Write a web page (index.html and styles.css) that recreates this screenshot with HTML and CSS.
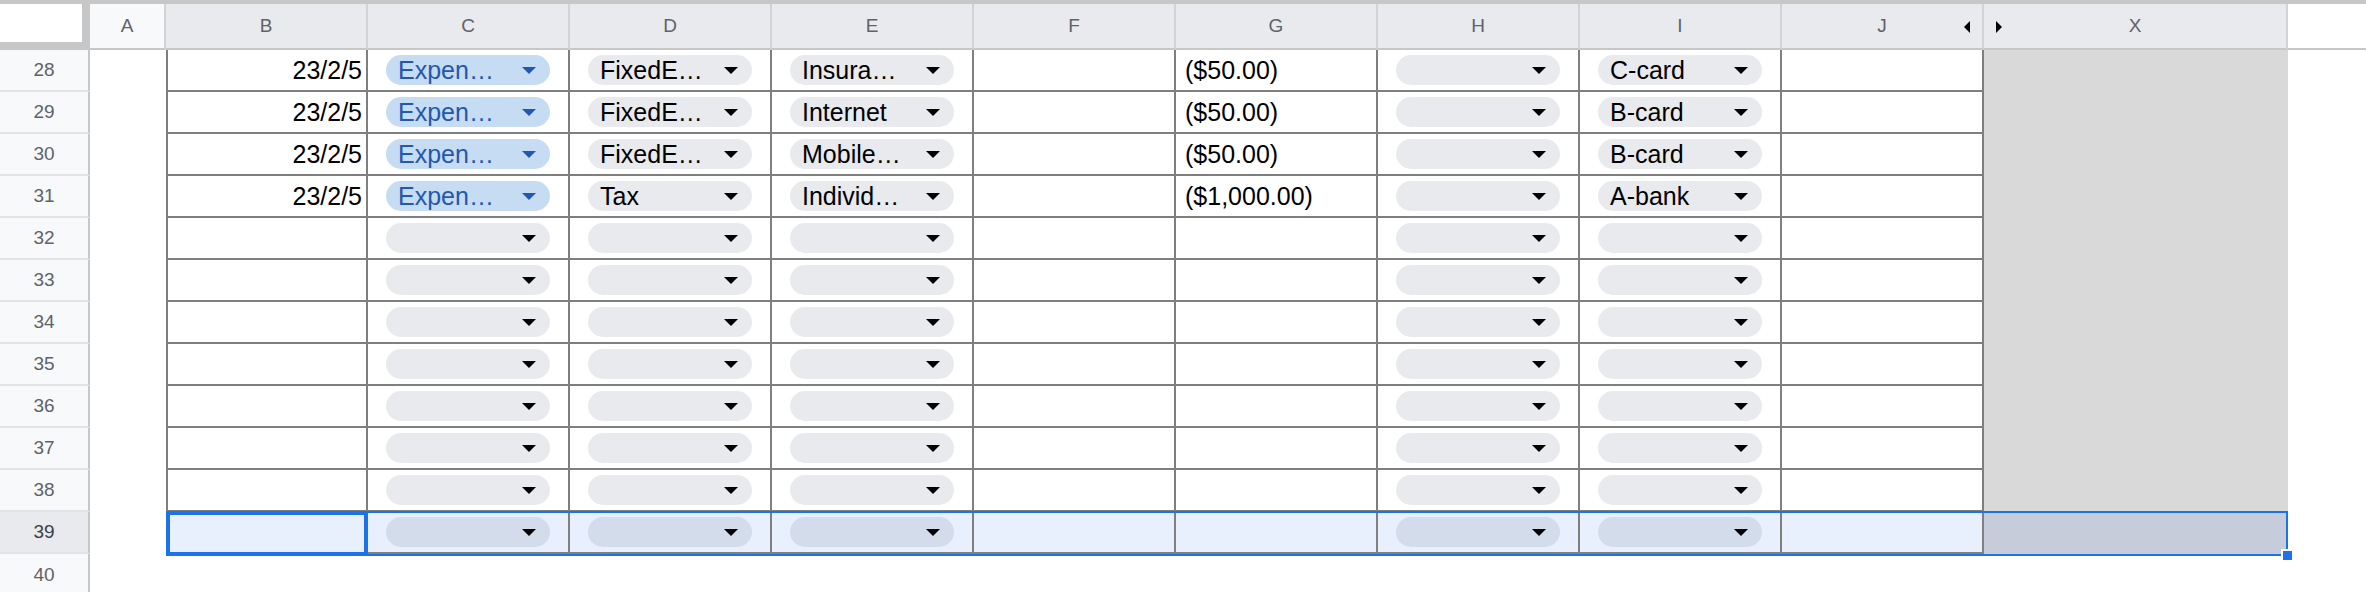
FILE: index.html
```html
<!DOCTYPE html>
<html lang="en">
<head>
    <meta charset="UTF-8">
    <title>Sheet</title>
    <link rel="stylesheet" href="styles.css">
</head>
<body>
<div class="sheet">
    <div class="topbar"></div>

    <div class="row head">
        <div class="corner"></div>
        <div class="ch">A</div>
        <div class="ch on">B</div>
        <div class="ch on">C</div>
        <div class="ch on">D</div>
        <div class="ch on">E</div>
        <div class="ch on">F</div>
        <div class="ch on">G</div>
        <div class="ch on">H</div>
        <div class="ch on">I</div>
        <div class="ch on">J<span class="hid-left"></span></div>
        <div class="ch on">X<span class="hid-right"></span></div>
        <div class="ch rest"></div>
    </div>

    <div class="row">
        <div class="rh">28</div><div class="a"></div>
        <div class="cell b num">23/2/5</div>
        <div class="cell"><span class="chip blue">Expen…<i class="caret"></i></span></div>
        <div class="cell"><span class="chip">FixedE…<i class="caret"></i></span></div>
        <div class="cell"><span class="chip">Insura…<i class="caret"></i></span></div>
        <div class="cell"></div>
        <div class="cell txt">($50.00)</div>
        <div class="cell"><span class="chip"><i class="caret"></i></span></div>
        <div class="cell"><span class="chip">C-card<i class="caret"></i></span></div>
        <div class="cell"></div>
        <div class="x"></div><div class="rest"></div>
    </div>
    <div class="row">
        <div class="rh">29</div><div class="a"></div>
        <div class="cell b num">23/2/5</div>
        <div class="cell"><span class="chip blue">Expen…<i class="caret"></i></span></div>
        <div class="cell"><span class="chip">FixedE…<i class="caret"></i></span></div>
        <div class="cell"><span class="chip">Internet<i class="caret"></i></span></div>
        <div class="cell"></div>
        <div class="cell txt">($50.00)</div>
        <div class="cell"><span class="chip"><i class="caret"></i></span></div>
        <div class="cell"><span class="chip">B-card<i class="caret"></i></span></div>
        <div class="cell"></div>
        <div class="x"></div><div class="rest"></div>
    </div>
    <div class="row">
        <div class="rh">30</div><div class="a"></div>
        <div class="cell b num">23/2/5</div>
        <div class="cell"><span class="chip blue">Expen…<i class="caret"></i></span></div>
        <div class="cell"><span class="chip">FixedE…<i class="caret"></i></span></div>
        <div class="cell"><span class="chip">Mobile…<i class="caret"></i></span></div>
        <div class="cell"></div>
        <div class="cell txt">($50.00)</div>
        <div class="cell"><span class="chip"><i class="caret"></i></span></div>
        <div class="cell"><span class="chip">B-card<i class="caret"></i></span></div>
        <div class="cell"></div>
        <div class="x"></div><div class="rest"></div>
    </div>
    <div class="row">
        <div class="rh">31</div><div class="a"></div>
        <div class="cell b num">23/2/5</div>
        <div class="cell"><span class="chip blue">Expen…<i class="caret"></i></span></div>
        <div class="cell"><span class="chip">Tax<i class="caret"></i></span></div>
        <div class="cell"><span class="chip">Individ…<i class="caret"></i></span></div>
        <div class="cell"></div>
        <div class="cell txt">($1,000.00)</div>
        <div class="cell"><span class="chip"><i class="caret"></i></span></div>
        <div class="cell"><span class="chip">A-bank<i class="caret"></i></span></div>
        <div class="cell"></div>
        <div class="x"></div><div class="rest"></div>
    </div>

    <div class="row">
        <div class="rh">32</div><div class="a"></div>
        <div class="cell b"></div>
        <div class="cell"><span class="chip"><i class="caret"></i></span></div>
        <div class="cell"><span class="chip"><i class="caret"></i></span></div>
        <div class="cell"><span class="chip"><i class="caret"></i></span></div>
        <div class="cell"></div><div class="cell"></div>
        <div class="cell"><span class="chip"><i class="caret"></i></span></div>
        <div class="cell"><span class="chip"><i class="caret"></i></span></div>
        <div class="cell"></div>
        <div class="x"></div><div class="rest"></div>
    </div>
    <div class="row">
        <div class="rh">33</div><div class="a"></div>
        <div class="cell b"></div>
        <div class="cell"><span class="chip"><i class="caret"></i></span></div>
        <div class="cell"><span class="chip"><i class="caret"></i></span></div>
        <div class="cell"><span class="chip"><i class="caret"></i></span></div>
        <div class="cell"></div><div class="cell"></div>
        <div class="cell"><span class="chip"><i class="caret"></i></span></div>
        <div class="cell"><span class="chip"><i class="caret"></i></span></div>
        <div class="cell"></div>
        <div class="x"></div><div class="rest"></div>
    </div>
    <div class="row">
        <div class="rh">34</div><div class="a"></div>
        <div class="cell b"></div>
        <div class="cell"><span class="chip"><i class="caret"></i></span></div>
        <div class="cell"><span class="chip"><i class="caret"></i></span></div>
        <div class="cell"><span class="chip"><i class="caret"></i></span></div>
        <div class="cell"></div><div class="cell"></div>
        <div class="cell"><span class="chip"><i class="caret"></i></span></div>
        <div class="cell"><span class="chip"><i class="caret"></i></span></div>
        <div class="cell"></div>
        <div class="x"></div><div class="rest"></div>
    </div>
    <div class="row">
        <div class="rh">35</div><div class="a"></div>
        <div class="cell b"></div>
        <div class="cell"><span class="chip"><i class="caret"></i></span></div>
        <div class="cell"><span class="chip"><i class="caret"></i></span></div>
        <div class="cell"><span class="chip"><i class="caret"></i></span></div>
        <div class="cell"></div><div class="cell"></div>
        <div class="cell"><span class="chip"><i class="caret"></i></span></div>
        <div class="cell"><span class="chip"><i class="caret"></i></span></div>
        <div class="cell"></div>
        <div class="x"></div><div class="rest"></div>
    </div>
    <div class="row">
        <div class="rh">36</div><div class="a"></div>
        <div class="cell b"></div>
        <div class="cell"><span class="chip"><i class="caret"></i></span></div>
        <div class="cell"><span class="chip"><i class="caret"></i></span></div>
        <div class="cell"><span class="chip"><i class="caret"></i></span></div>
        <div class="cell"></div><div class="cell"></div>
        <div class="cell"><span class="chip"><i class="caret"></i></span></div>
        <div class="cell"><span class="chip"><i class="caret"></i></span></div>
        <div class="cell"></div>
        <div class="x"></div><div class="rest"></div>
    </div>
    <div class="row">
        <div class="rh">37</div><div class="a"></div>
        <div class="cell b"></div>
        <div class="cell"><span class="chip"><i class="caret"></i></span></div>
        <div class="cell"><span class="chip"><i class="caret"></i></span></div>
        <div class="cell"><span class="chip"><i class="caret"></i></span></div>
        <div class="cell"></div><div class="cell"></div>
        <div class="cell"><span class="chip"><i class="caret"></i></span></div>
        <div class="cell"><span class="chip"><i class="caret"></i></span></div>
        <div class="cell"></div>
        <div class="x"></div><div class="rest"></div>
    </div>
    <div class="row">
        <div class="rh">38</div><div class="a"></div>
        <div class="cell b"></div>
        <div class="cell"><span class="chip"><i class="caret"></i></span></div>
        <div class="cell"><span class="chip"><i class="caret"></i></span></div>
        <div class="cell"><span class="chip"><i class="caret"></i></span></div>
        <div class="cell"></div><div class="cell"></div>
        <div class="cell"><span class="chip"><i class="caret"></i></span></div>
        <div class="cell"><span class="chip"><i class="caret"></i></span></div>
        <div class="cell"></div>
        <div class="x"></div><div class="rest"></div>
    </div>

    <!-- selected row -->
    <div class="row selected">
        <div class="rh">39</div><div class="a"></div>
        <div class="cell b"></div>
        <div class="cell"><span class="chip"><i class="caret"></i></span></div>
        <div class="cell"><span class="chip"><i class="caret"></i></span></div>
        <div class="cell"><span class="chip"><i class="caret"></i></span></div>
        <div class="cell"></div><div class="cell"></div>
        <div class="cell"><span class="chip"><i class="caret"></i></span></div>
        <div class="cell"><span class="chip"><i class="caret"></i></span></div>
        <div class="cell"></div>
        <div class="x"></div><div class="rest"></div>
        <div class="range"><span class="handle"></span></div>
        <div class="active"></div>
    </div>

    <div class="row last">
        <div class="rh">40</div>
    </div>
</div>
</body>
</html>
```

FILE: styles.css
```css
* {
    box-sizing: border-box;
    margin: 0;
    padding: 0;
}

body {
    font-family: "Liberation Sans", Arial, sans-serif;
    background-color: #fff;
    overflow: hidden;
}

.sheet {
    width: 2366px;
}

.topbar {
    height: 4px;
    background-color: #c7c7c7;
}

.row {
    display: grid;
    grid-template-columns: 90px 76px repeat(9, 202px) 304px 1fr;
    height: 42px;
    position: relative;
}

/* header row */
.row.head {
    height: 46px;
}

.corner {
    background-color: #fff;
    border-right: 8px solid #c7c7c7;
    border-bottom: 8px solid #c7c7c7;
}

.ch {
    position: relative;
    display: flex;
    align-items: center;
    justify-content: center;
    background-color: #f8f9fa;
    color: #5f6368;
    font-size: 19px;
    border-right: 2px solid #d2d3d5;
    border-bottom: 2px solid #c7c7c7;
}

.ch.on {
    background-color: #e8eaed;
}

.ch.rest {
    border-right: none;
}

.hid-left, .hid-right {
    position: absolute;
    top: 17px;
    width: 0;
    height: 0;
    border-top: 6px solid transparent;
    border-bottom: 6px solid transparent;
}

.hid-left {
    right: 12px;
    border-right: 6px solid #000;
}

.hid-right {
    left: 12px;
    border-left: 6px solid #000;
}

/* row numbers */
.rh {
    display: flex;
    align-items: center;
    justify-content: center;
    background-color: #f8f9fa;
    color: #5f6368;
    font-size: 19px;
    border-right: 2px solid #c7c7c7;
    border-bottom: 2px solid #e1e3e6;
}

.a, .rest {
    background-color: #fff;
}

.x {
    background-color: #d9d9d9;
}

.cell {
    display: flex;
    align-items: center;
    justify-content: center;
    font-size: 25px;
    color: #000;
    border-right: 2px solid #7f7f7f;
    border-bottom: 2px solid #7f7f7f;
    white-space: nowrap;
}

.cell.b {
    border-left: 2px solid #7f7f7f;
}

.cell.num {
    justify-content: flex-end;
    padding-right: 4px;
}

.cell.txt {
    justify-content: flex-start;
    padding-left: 9px;
}

/* dropdown chips */
.chip {
    display: flex;
    align-items: center;
    justify-content: space-between;
    width: 164px;
    height: 30px;
    padding: 0 14px 0 12px;
    border-radius: 15px;
    background-color: #e8eaed;
    color: #000;
    font-size: 25px;
}

.chip .caret {
    margin-left: auto;
    width: 0;
    height: 0;
    border-left: 7px solid transparent;
    border-right: 7px solid transparent;
    border-top: 7px solid #000;
}

.chip.blue {
    background-color: #c5dcf2;
    color: #2457b0;
}

.chip.blue .caret {
    border-top-color: #2457b0;
}

/* selection */
.selected .rh {
    background-color: #e8eaed;
    color: #3c4043;
}

.selected .cell {
    background-color: #e8f0fe;
}

.selected .chip {
    background-color: #d3dcea;
}

.selected .x {
    background-color: #c6ccd9;
}

.range {
    position: absolute;
    left: 166px;
    top: -1px;
    width: 2122px;
    height: 45px;
    border: 2px solid #1a73e8;
    pointer-events: none;
}

.active {
    position: absolute;
    left: 166px;
    top: -1px;
    width: 202px;
    height: 45px;
    border: 4px solid #1a73e8;
}

.handle {
    position: absolute;
    right: -8px;
    bottom: -8px;
    width: 13px;
    height: 13px;
    background-color: #1a73e8;
    border: 2px solid #fff;
}

.row.last .rh {
    border-bottom: none;
}
```
